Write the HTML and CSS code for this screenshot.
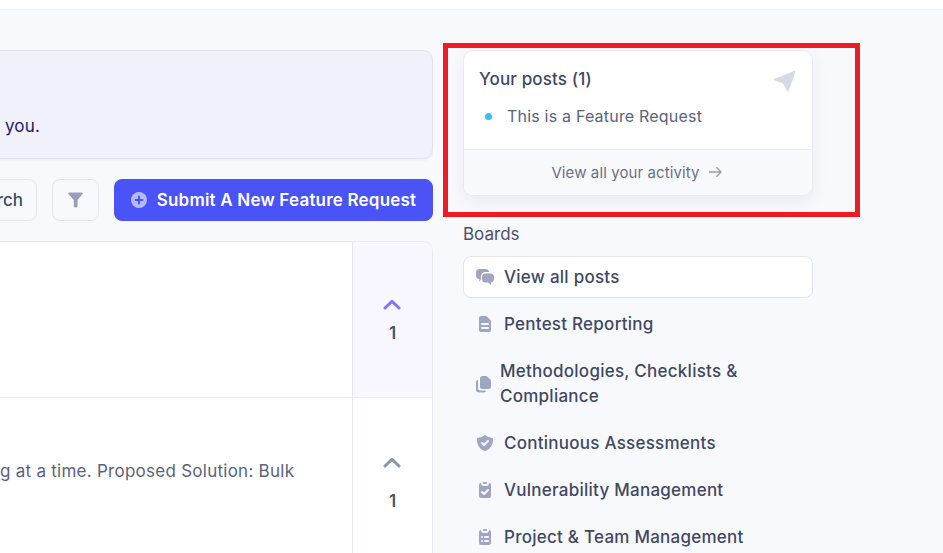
FILE: index.html
```html
<!DOCTYPE html>
<html lang="en">
<head>
<meta charset="utf-8">
<title>Feature Requests</title>
<link rel="stylesheet" href="styles.css">
</head>
<body>
<header class="topbar"></header>
<div class="content">
  <main class="main">
    <section class="notice">you.</section>
    <div class="toolbar">
      <button class="btn btn-search">Search</button>
      <button class="btn btn-filter" aria-label="Filter">
        <svg class="filter-icon" viewBox="0 0 16 16"><path d="M1.200 0h13.600c.9 0 1.300 1 .7 1.700L10.200 8v6.600c0 .5-.3.8-.7 1l-2.200 .4c-.6 0-1.100-.4-1.100-1V8L.5 1.700C-.1 1 .3 0 1.200 0z"/></svg>
      </button>
      <button class="btn btn-submit">
        <svg class="plus-icon" viewBox="0 0 16 16"><circle cx="8" cy="8" r="8" fill="#b5baf8"/><path d="M8 4.600v6.800M4.600 8h6.800" stroke="#4a53f5" stroke-width="2" stroke-linecap="round"/></svg>
        Submit A New Feature Request
      </button>
    </div>
    <section class="posts">
      <article class="post post-first">
        <div class="post-body"></div>
        <div class="vote vote-active">
          <svg class="chevron" viewBox="0 0 18 11"><path d="M2 9l7-6.600L16 9"/></svg>
          <span class="vote-count">1</span>
        </div>
      </article>
      <article class="post post-second">
        <div class="post-body post-text">g at a time. Proposed Solution: Bulk</div>
        <div class="vote vote-plain">
          <svg class="chevron" viewBox="0 0 18 11"><path d="M2 9l7-6.600L16 9"/></svg>
          <span class="vote-count">1</span>
        </div>
      </article>
    </section>
  </main>
  <aside class="side">
    <section class="your-posts">
      <div class="yp-body">
        <div class="yp-head">
          <h2 class="yp-title">Your posts (1)</h2>
          <svg class="plane" viewBox="0 0 23 23"><path d="M1 9 21.800.8c.5-.2.9.2.7.7L15.500 21.500c-.2.6-.8.6-1 .1L10 13.500 1 10c-.5-.2-.5-.8 0-1z"/></svg>
        </div>
        <div class="yp-item"><span class="dot"></span>This is a Feature Request</div>
      </div>
      <a class="yp-foot">View all your activity
        <svg class="arrow" viewBox="0 0 14 12"><path d="M1 6h12M8.400 1.300 13 6l-4.600 4.700"/></svg>
      </a>
    </section>
    <h3 class="boards-title">Boards</h3>
    <nav class="boards">
      <a class="board board-active">
        <svg class="bicon" viewBox="0 0 20 20"><path d="M1 5.500A3.500 3.500 0 0 1 4.500 2h6A3.500 3.500 0 0 1 14 5h-3.500A4.500 4.500 0 0 0 6 9.500V12l-1.700 3V12A3.500 3.500 0 0 1 1 8.500z"/><path d="M10.500 6.500h5A3.500 3.500 0 0 1 19 10v2a3.500 3.500 0 0 1-3 3.400V18l-3-2.500h-2.500A3.500 3.500 0 0 1 7 12v-2a3.500 3.500 0 0 1 3.500-3.500z"/></svg>
        <span>View all posts</span>
      </a>
      <a class="board">
        <svg class="bicon" viewBox="0 0 20 20"><path fill-rule="evenodd" d="M4 4a2 2 0 012-2h4.586A2 2 0 0112 2.586L15.414 6A2 2 0 0116 7.414V16a2 2 0 01-2 2H6a2 2 0 01-2-2V4zm2 6a1 1 0 011-1h6a1 1 0 110 2H7a1 1 0 01-1-1zm1 3a1 1 0 100 2h6a1 1 0 100-2H7z"/></svg>
        <span>Pentest Reporting</span>
      </a>
      <a class="board board-wrap">
        <svg class="bicon" viewBox="0 0 20 20"><path d="M7 4.500a2.500 2.500 0 0 1 2.500-2.500h3.300c.6 0 1.200.2 1.600.7l2.900 2.900c.4.400.7 1 .7 1.600v5.300a2.500 2.500 0 0 1-2.500 2.500h-6A2.500 2.500 0 0 1 7 12.500z"/><path d="M5 6v8a2.500 2.500 0 0 0 2.500 2.500H13a2 2 0 0 1-2 2H6a3 3 0 0 1-3-3V8a2 2 0 0 1 2-2z"/></svg>
        <span>Methodologies, Checklists &amp; Compliance</span>
      </a>
      <a class="board">
        <svg class="bicon" viewBox="0 0 20 20"><path fill-rule="evenodd" d="M2.166 4.999A11.954 11.954 0 0010 1.944 11.954 11.954 0 0017.834 5c.11.65.166 1.32.166 2.001 0 5.225-3.34 9.67-8 11.317C5.34 16.67 2 12.225 2 7c0-.682.057-1.35.166-2.001zm11.541 3.708a1 1 0 00-1.414-1.414L9 10.586 7.707 9.293a1 1 0 00-1.414 1.414l2 2a1 1 0 001.414 0l4-4z"/></svg>
        <span>Continuous Assessments</span>
      </a>
      <a class="board">
        <svg class="bicon" viewBox="0 0 20 20"><path d="M9 2a1 1 0 000 2h2a1 1 0 100-2H9z"/><path fill-rule="evenodd" d="M4 5a2 2 0 012-2 3 3 0 003 3h2a3 3 0 003-3 2 2 0 012 2v11a2 2 0 01-2 2H6a2 2 0 01-2-2V5zm9.707 5.707a1 1 0 00-1.414-1.414L9 12.586l-1.293-1.293a1 1 0 00-1.414 1.414l2 2a1 1 0 001.414 0l4-4z"/></svg>
        <span>Vulnerability Management</span>
      </a>
      <a class="board">
        <svg class="bicon" viewBox="0 0 20 20"><path d="M9 2a1 1 0 000 2h2a1 1 0 100-2H9z"/><path fill-rule="evenodd" d="M4 5a2 2 0 012-2 3 3 0 003 3h2a3 3 0 003-3 2 2 0 012 2v11a2 2 0 01-2 2H6a2 2 0 01-2-2V5zm3 4a1 1 0 000 2h.01a1 1 0 100-2H7zm3 0a1 1 0 000 2h3a1 1 0 100-2h-3zm-3 4a1 1 0 100 2h.01a1 1 0 100-2H7zm3 0a1 1 0 100 2h3a1 1 0 100-2h-3z"/></svg>
        <span>Project &amp; Team Management</span>
      </a>
    </nav>
  </aside>
</div>
<div class="annotation"></div>
</body>
</html>
```

FILE: styles.css
```css
* { box-sizing: border-box; }
html, body { height: 100%; overflow: hidden; }
body {
  margin: 0;
  background: #f8f9fd;
  font-family: Inter, "Liberation Sans", sans-serif;
  color: #414862;
  position: relative;
}
.topbar {
  height: 10px;
  background: #fff;
  border-bottom: 1px solid #eeeff5;
}
.content {
  display: flex;
  gap: 30px;
  padding-top: 40px;
}
.main {
  width: 433px;
  flex: none;
  overflow: hidden;
  display: flex;
  flex-direction: column;
  gap: 20px;
}
.notice {
  height: 109px;
  margin-left: -12px;
  padding: 63px 0 0 16px;
  background: #f1f1fb;
  border: 1px solid #e0e0fa;
  border-radius: 10px;
  box-shadow: 0 1px 3px rgba(60, 60, 120, .08);
  font-size: 17px;
  letter-spacing: .15px;
  line-height: 24px;
  color: #221c6b;
}
.toolbar {
  display: flex;
  justify-content: flex-end;
  gap: 15px;
  height: 42px;
}
.btn {
  flex: none;
  height: 42px;
  font: inherit;
  border-radius: 8px;
  border: 1px solid #e3e4ee;
  background: #f8f9fd;
  display: flex;
  align-items: center;
  justify-content: center;
  padding: 0;
}
.btn-search {
  width: 100px;
  margin-left: -63px;
  justify-content: flex-end;
  padding-right: 13px;
  font-size: 17px;
  font-weight: 450;
  color: #414862;
}
.btn-filter { width: 47px; }
.filter-icon { width: 15px; height: 16px; fill: #9a9fb9; }
.btn-submit {
  width: 319px;
  background: #4a53f5;
  border-color: #4a53f5;
  color: #fff;
  font-size: 17px;
  font-weight: 600;
  letter-spacing: .2px;
  gap: 10px;
}
.plus-icon { width: 16px; height: 16px; }
.posts {
  margin-left: -12px;
  background: #fff;
  border: 1px solid #e8e9f2;
  border-radius: 10px 10px 0 0;
  overflow: hidden;
  height: 340px;
}
.post { display: flex; }
.post-first { height: 156px; border-bottom: 1px solid #ecedf4; }
.post-second { height: 184px; }
.post-body { flex: 1; min-width: 0; }
.post-text {
  padding: 61px 0 0 11px;
  font-size: 17px;
  letter-spacing: .26px;
  line-height: 24px;
  color: #5b627c;
  white-space: nowrap;
}
.vote {
  width: 80px;
  flex: none;
  border-left: 1px solid #e8e9f2;
  display: flex;
  flex-direction: column;
  align-items: center;
}
.vote-active {
  background: #f8f7ff;
  border-left-color: #e5e3fb;
  padding-top: 57px;
  gap: 13px;
}
.vote-plain { padding-top: 59px; gap: 23px; }
.chevron {
  width: 18px;
  height: 11px;
  margin-right: 1px;
  fill: none;
  stroke: #8e92ac;
  stroke-width: 3;
  stroke-linecap: round;
  stroke-linejoin: round;
}
.vote-active .chevron { stroke: #8072ff; }
.vote-count { font-size: 17px; font-weight: 600; line-height: 20px; color: #4a5068; }
.side { width: 350px; flex: none; }
.your-posts {
  background: #fff;
  border: 1px solid #e9eaf2;
  border-radius: 10px;
  height: 146px;
  overflow: hidden;
  box-shadow: 0 6px 16px rgba(60, 60, 110, .07);
  display: flex;
  flex-direction: column;
}
.yp-body { flex: 1; padding: 18px 16px 0 15px; }
.yp-head { display: flex; justify-content: space-between; align-items: flex-start; height: 36px; }
.yp-title { margin: 0; font-size: 17px; font-weight: 450; letter-spacing: .15px; line-height: 20px; color: #414862; }
.plane { width: 23px; height: 23px; fill: #d7dae5; margin-top: 1px; }
.yp-item {
  display: flex;
  align-items: center;
  height: 20px;
  margin-top: 1px;
  font-size: 16px;
  letter-spacing: .2px;
  color: #5b627c;
}
.dot {
  width: 7px;
  height: 7px;
  border-radius: 50%;
  background: #38bdf8;
  margin: 0 15px 0 6px;
}
.yp-foot {
  height: 46px;
  flex: none;
  background: #f8f9fd;
  border-top: 1px solid #e9eaf2;
  padding: 0 3px 1px 0;
  display: flex;
  align-items: center;
  justify-content: center;
  gap: 8px;
  font-size: 15px;
  letter-spacing: .1px;
  color: #686f89;
}
.arrow { width: 14px; height: 12px; fill: none; stroke: #9a9fb5; stroke-width: 1.400; }
.boards-title {
  margin: 28px 0 11px;
  font-size: 17px;
  font-weight: 400;
  line-height: 21px;
  color: #4a5068;
}
.boards { display: flex; flex-direction: column; gap: 5px; }
.board {
  display: flex;
  align-items: center;
  gap: 9px;
  padding: 7.500px 12px 7.500px 11px;
  border: 1px solid transparent;
  border-radius: 8px;
  font-size: 17px;
  font-weight: 450;
  letter-spacing: .25px;
  line-height: 25px;
  min-height: 42px;
  color: #414862;
}
.board-active { background: #fff; border-color: #e3e4ee; }
.board-wrap { gap: 7px; padding-left: 9px; }
.bicon { width: 20px; height: 20px; flex: none; fill: #a0a5c1; }
.annotation {
  position: absolute;
  left: 443px;
  top: 43px;
  width: 417px;
  height: 174px;
  border: 5px solid #ed1c24;
  pointer-events: none;
}
```
